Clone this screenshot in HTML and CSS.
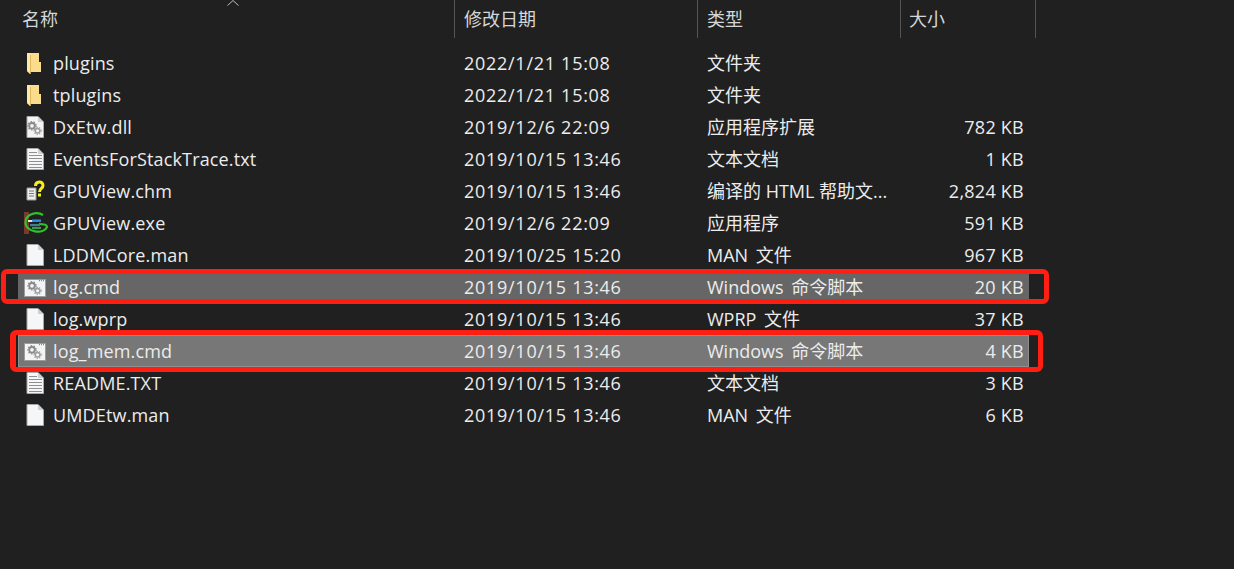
FILE: index.html
```html
<!DOCTYPE html>
<html lang="zh-CN">
<head>
<meta charset="utf-8">
<title>文件列表</title>
<link rel="stylesheet" href="styles.css">
</head>
<body>
<svg class="defs" width="0" height="0" aria-hidden="true">
  <defs>
    <symbol id="gears" viewBox="0 0 24 24">
      <circle cx="8" cy="10.8" r="2.8" fill="none" stroke="#8a8a8a" stroke-width="1.8"/>
      <circle cx="8" cy="10.8" r="4.1" fill="none" stroke="#8a8a8a" stroke-width="1.3" stroke-dasharray="1.5 1.4"/>
      <circle cx="13.6" cy="15.8" r="2.3" fill="#f2f4f6" stroke="#a0a0a0" stroke-width="1.5"/>
      <circle cx="13.6" cy="15.8" r="3.5" fill="none" stroke="#a0a0a0" stroke-width="1.2" stroke-dasharray="1.3 1.2"/>
    </symbol>
    <symbol id="i-folder" viewBox="0 0 24 24">
      <path d="M3 2H15V21H6V23L3 20Z" fill="#f5d06f"/>
      <path d="M6 2H15V11H17V21H6Z" fill="#fbdc8a"/>
      <path d="M3 2H6.5V23L3 20Z" fill="#fde9ae"/>
      <path d="M6.5 4V23" stroke="#d9ad4c" stroke-width=".8"/>
    </symbol>
    <symbol id="i-blank" viewBox="0 0 24 24">
      <path d="M3 1.5H14L19.5 7V22.5H3Z" fill="#f5f6f8" stroke="#a8a8a8"/>
      <path d="M14 1.5V7H19.5Z" fill="#cfcfcf"/>
    </symbol>
    <symbol id="i-text" viewBox="0 0 24 24">
      <path d="M3 1.5H14L19.5 7V22.5H3Z" fill="#f5f6f8" stroke="#a8a8a8"/>
      <path d="M14 1.5V7H19.5Z" fill="#cfcfcf"/>
      <path d="M5 5.5H13M5 8.5H18M5 11.5H18M5 14.5H18M5 17.5H18M5 20.5H18" stroke="#8f8f8f"/>
    </symbol>
    <symbol id="i-dll" viewBox="0 0 24 24">
      <path d="M3 1.5H14L19.5 7V22.5H3Z" fill="#f2f4f6" stroke="#a8a8a8"/>
      <path d="M14 1.5V7H19.5Z" fill="#cfcfcf"/>
      <use href="#gears" width="24" height="24"/>
    </symbol>
    <symbol id="i-cmd" viewBox="0 0 24 24">
      <rect x=".5" y="4.5" width="21" height="17" fill="#f2f4f6" stroke="#9c9c9c"/>
      <path d="M15 5.5H21" stroke="#8a8a8a" stroke-dasharray="1 1" stroke-width="1.4"/>
      <use href="#gears" width="24" height="24"/>
    </symbol>
    <symbol id="i-help" viewBox="0 0 24 24">
      <path d="M3 9H12V21H3Z" fill="#ededed" stroke="#9a9a9a"/>
      <path d="M5 12H10M5 14.5H10M5 17H10" stroke="#777"/>
      <path d="M11.5 7C11.5 2 19 1.5 19 6.5C19 9.5 15.5 9.5 15.5 13" fill="none" stroke="#f7ee1a" stroke-width="3"/>
      <rect x="14" y="14.5" width="3" height="3" fill="#f7ee1a"/>
    </symbol>
    <symbol id="i-exe" viewBox="0 0 24 24">
      <rect x="0" y="1" width="5" height="22" fill="#7a3a2a"/>
      <path d="M19 4C13 0 1.5 3 1.5 11.5C1.5 21 20 24 23 16C23 14 19 13 15 13" fill="none" stroke="#32c02e" stroke-width="2.2"/>
      <rect x="4" y="9" width="5" height="2" fill="#e6e6e6"/>
      <rect x="8" y="8.5" width="9" height="2.4" fill="#2f8fdc"/>
      <rect x="6" y="13" width="10" height="2.2" fill="#3f7f8f"/>
      <rect x="8" y="16" width="9" height="2" fill="#3a9a4a"/>
    </symbol>
  </defs>
</svg>

<main class="explorer">
  <header class="columns">
    <div class="col col-name">名称</div>
    <div class="col col-date">修改日期</div>
    <div class="col col-type">类型</div>
    <div class="col col-size">大小</div>
  </header>

  <ul class="list">
    <li class="row"><svg class="icon"><use href="#i-folder"/></svg><span class="name">plugins</span><span class="date">2022/1/21 15:08</span><span>文件夹</span><span class="size"></span></li>
    <li class="row"><svg class="icon"><use href="#i-folder"/></svg><span class="name">tplugins</span><span class="date">2022/1/21 15:08</span><span>文件夹</span><span class="size"></span></li>
    <li class="row"><svg class="icon"><use href="#i-dll"/></svg><span class="name">DxEtw.dll</span><span class="date">2019/12/6 22:09</span><span>应用程序扩展</span><span class="size">782 KB</span></li>
    <li class="row"><svg class="icon"><use href="#i-text"/></svg><span class="name">EventsForStackTrace.txt</span><span class="date">2019/10/15 13:46</span><span>文本文档</span><span class="size">1 KB</span></li>
    <li class="row"><svg class="icon"><use href="#i-help"/></svg><span class="name">GPUView.chm</span><span class="date">2019/10/15 13:46</span><span>编译的 HTML 帮助文...</span><span class="size">2,824 KB</span></li>
    <li class="row"><svg class="icon"><use href="#i-exe"/></svg><span class="name">GPUView.exe</span><span class="date">2019/12/6 22:09</span><span>应用程序</span><span class="size">591 KB</span></li>
    <li class="row"><svg class="icon"><use href="#i-blank"/></svg><span class="name">LDDMCore.man</span><span class="date">2019/10/25 15:20</span><span class="mixed">MAN 文件</span><span class="size">967 KB</span></li>
    <li class="row row-hover"><svg class="icon"><use href="#i-cmd"/></svg><span class="name">log.cmd</span><span class="date">2019/10/15 13:46</span><span class="mixed">Windows 命令脚本</span><span class="size">20 KB</span></li>
    <li class="row"><svg class="icon"><use href="#i-blank"/></svg><span class="name">log.wprp</span><span class="date">2019/10/15 13:46</span><span class="mixed">WPRP 文件</span><span class="size">37 KB</span></li>
    <li class="row row-selected"><svg class="icon"><use href="#i-cmd"/></svg><span class="name">log_mem.cmd</span><span class="date">2019/10/15 13:46</span><span class="mixed">Windows 命令脚本</span><span class="size">4 KB</span></li>
    <li class="row"><svg class="icon"><use href="#i-text"/></svg><span class="name">README.TXT</span><span class="date">2019/10/15 13:46</span><span>文本文档</span><span class="size">3 KB</span></li>
    <li class="row"><svg class="icon"><use href="#i-blank"/></svg><span class="name">UMDEtw.man</span><span class="date">2019/10/15 13:46</span><span class="mixed">MAN 文件</span><span class="size">6 KB</span></li>
  </ul>
</main>

<svg class="sort-arrow" viewBox="0 0 14 6" aria-hidden="true"><path d="M1.5 5.5L7 .5L12.5 5.5" fill="none" stroke="#bdbdbd"/></svg>
<div class="mark mark-a"></div>
<div class="mark mark-b"></div>
</body>
</html>
```

FILE: styles.css
```css
* { box-sizing: border-box; }
html, body { margin: 0; height: 100%; }
body {
  position: relative;
  height: 569px;
  overflow: hidden;
  background: #202020;
  color: #ececec;
  font: 18px/32px "Open Sans", "Noto Sans CJK SC", sans-serif;
}
.defs { position: absolute; }

.columns { display: flex; height: 38px; color: #d4d7d9; }
.col { border-right: 1px solid #555; line-height: 38px; }
.col-name { width: 455px; padding-left: 22px; }
.col-date { width: 243px; padding-left: 9px; }
.col-type { width: 203px; padding-left: 9px; }
.col-size { width: 135px; padding-left: 8px; }

.list { list-style: none; margin: 9px 0 0 18px; padding: 0; width: 1011px; }
.row {
  display: grid;
  grid-template-columns: 35px 411px 243px 200px 117px;
  height: 32px;
  align-items: center;
  white-space: nowrap;
}
.icon { width: 24px; height: 24px; margin-left: 6px; }
.name { letter-spacing: .15px; }
.date { letter-spacing: .72px; }
.mixed { word-spacing: 3px; }
.size { text-align: right; letter-spacing: .25px; }
.row-hover { background: #666; }
.row-selected { background: #777; box-shadow: inset 0 0 0 1px #8e8e8e; }

.sort-arrow { position: absolute; left: 226px; top: 0; width: 14px; height: 6px; }

.mark { position: absolute; border-style: solid; border-color: #ff1e12; border-radius: 6px; }
.mark-a { left: 1px; top: 269px; width: 1048px; height: 35px; border-width: 5px; }
.mark-b { left: 10px; top: 330px; width: 1033px; height: 42px; border-width: 5px 5px 5px 6px; }
```
